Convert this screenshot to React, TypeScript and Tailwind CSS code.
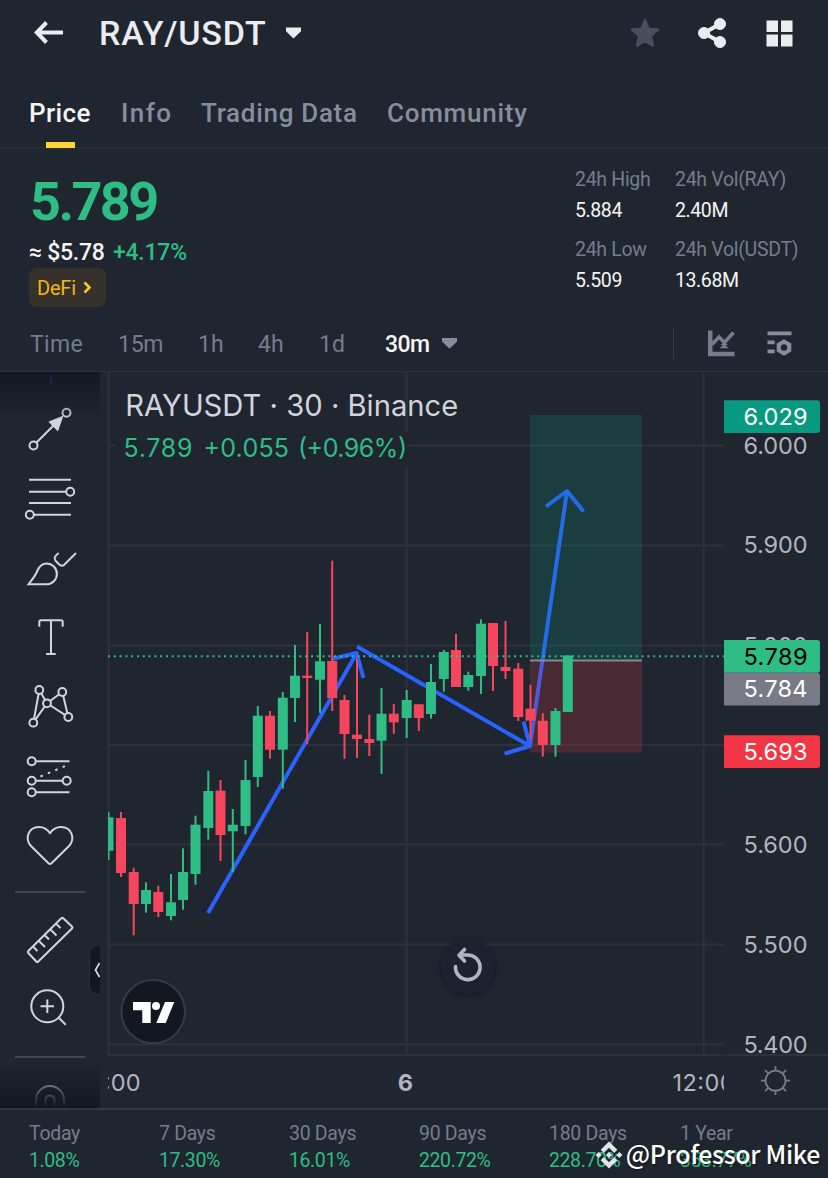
import { ReactNode } from 'react'

type Candle = [x: number, high: number, low: number, top: number, bottom: number, up: boolean]

const CANDLES: Candle[] = [
  [108.5, 812.3, 860, 817.3, 850.7, true],
  [121, 812, 877, 818, 873, false],
  [133.7, 867.7, 935.3, 872, 904, false],
  [146, 882.3, 912.7, 890, 904, true],
  [158.3, 885.7, 917, 892, 912, false],
  [171, 874, 920.3, 902.3, 916, true],
  [183, 848.3, 909.7, 872, 900, true],
  [195.5, 815.7, 884.7, 824.7, 874, true],
  [208.3, 770.7, 839.7, 791, 828, true],
  [220.5, 780, 861, 790.7, 835, false],
  [232.8, 809, 872, 824.7, 831.3, true],
  [245.5, 760, 834.3, 780, 826, true],
  [257.8, 706, 787, 715.7, 777, true],
  [270, 711, 758.7, 715.7, 749.7, false],
  [282.8, 692, 788.7, 697.7, 749.7, true],
  [295, 645, 722, 675.7, 698, true],
  [307.2, 632, 744, 675.7, 678, false],
  [320, 624, 713, 661.3, 679.7, true],
  [332.2, 560.7, 711, 661, 698, false],
  [344.5, 695, 758.7, 700, 734, false],
  [357, 659, 758, 734.7, 739, false],
  [369.3, 714.7, 756, 739, 743, false],
  [381.5, 688, 774, 713.7, 740.7, true],
  [393.8, 704, 733.7, 713.7, 722.3, false],
  [406.7, 690, 738, 700, 718, true],
  [418.8, 704.3, 731, 704.3, 718, false],
  [431, 664, 718.7, 682, 714, true],
  [443.8, 650, 691.7, 652, 679, true],
  [456, 634, 687, 650, 687, false],
  [468.3, 671.7, 690.7, 675, 687, true],
  [481, 619.3, 694, 623.7, 676, true],
  [493, 623, 691, 623, 666, false],
  [505.5, 621, 679, 667, 671, false],
  [518.3, 663, 721, 668.7, 717, false],
  [530.5, 684.7, 738.3, 708.7, 720.7, false],
  [542.8, 713.3, 756.7, 720.7, 745, false],
  [555.5, 708, 756.7, 711, 745, true],
  [567.8, 655.5, 712, 655.5, 712, true],
]

const GRID_Y = [445.5, 545.5, 645.5, 745, 844.5, 944.5, 1044.5]

const PRICE_LABELS = [
  { y: 453.5, text: '6.000' },
  { y: 553, text: '5.900' },
  { y: 653.5, text: '5.800' },
  { y: 852.5, text: '5.600' },
  { y: 952.5, text: '5.500' },
  { y: 1052.5, text: '5.400' },
]

const PRICE_TAGS = [
  { y: 400.3, text: '6.029', bg: '#089981', color: '#ffffff' },
  { y: 640, text: '5.789', bg: '#2ebd85', color: '#000000' },
  { y: 672.7, text: '5.784', bg: '#787b86', color: '#ffffff' },
  { y: 735.3, text: '5.693', bg: '#f23645', color: '#ffffff' },
]

const PERIODS = [
  { label: 'Today', value: '1.08%' },
  { label: '7 Days', value: '17.30%' },
  { label: '30 Days', value: '16.01%' },
  { label: '90 Days', value: '220.72%' },
  { label: '180 Days', value: '228.70%' },
  { label: '1 Year', value: '353.77%' },
]

function Header() {
  return (
    <header className="flex h-[66px] items-center pl-[33px] pr-[35px] text-[#eaecef]">
      <svg width="31" height="24" viewBox="0 0 31 24" fill="none" stroke="currentColor" strokeWidth="4">
        <path d="M30 11.500H4M13.500 1.500L3.800 11.500L13.500 21.500" />
      </svg>
      <h1 className="ml-[35px] whitespace-nowrap text-[34px] font-medium leading-[40px] tracking-[0.8px]">RAY/USDT</h1>
      <svg className="-mt-px ml-[19px]" width="17" height="12" viewBox="0 0 17 12" fill="currentColor">
        <path d="M1 0.5h15v3.8L8.500 11.500L1 4.300Z" />
      </svg>
      <div className="ml-auto flex items-center">
        <svg width="30" height="30" viewBox="0 0 30 30" fill="#474f5e" stroke="#474f5e" strokeWidth="2.400" strokeLinejoin="round">
          <path d="M15 2.200L18.600 10.600L28 11.500L21 17.900L22.900 27.600L15 22.800L7.100 27.600L9 17.900L2 11.500L11.400 10.600Z" />
        </svg>
        <svg className="ml-[37px]" width="30" height="32" viewBox="0 0 30 32" fill="currentColor" stroke="currentColor">
          <path d="M23 7L7 16L23 25" fill="none" strokeWidth="4" />
          <circle cx="23" cy="7" r="5.500" />
          <circle cx="7" cy="16" r="5.500" />
          <circle cx="23" cy="25" r="5.500" />
        </svg>
        <svg className="ml-[39px]" width="27" height="27" viewBox="0 0 27 27" fill="currentColor">
          <path d="M0.500 0.500h11.500v11.500h-11.500zM15 0.500h11.500v11.500h-11.500zM0.500 14.500h11.500v12h-11.500zM15 14.500h11.500v12h-11.500z" />
        </svg>
      </div>
    </header>
  )
}

function Tabs() {
  return (
    <nav className="flex h-[83px] items-start border-b-2 border-[#262c36] pl-[29px] pt-[30px] text-[26px] font-medium leading-[34px] text-[#848e9c]">
      <div className="flex w-[92px] flex-col">
        <span className="tracking-[0.4px] text-[#f5f5f5]">Price</span>
        <span className="ml-[16.500px] mt-[12px] h-[6px] w-[29px] bg-[#fcd535]" />
      </div>
      <span className="w-[80px] tracking-[1.400px]">Info</span>
      <span className="w-[186px] tracking-[0.7px]">Trading Data</span>
      <span className="tracking-[0.75px]">Community</span>
    </nav>
  )
}

function Stat({ label, value }: { label: string; value: string }) {
  return (
    <div className="h-[69.500px] whitespace-nowrap text-[19.500px] leading-[31px]">
      <p className="tracking-[-0.3px] text-[#747d8b]">{label}</p>
      <p className="tracking-[-0.4px] text-[#f5f5f5]">{value}</p>
    </div>
  )
}

function Summary() {
  return (
    <section className="flex h-[167px] justify-between pl-[29px]">
      <div>
        <p className="ml-px mt-[21px] text-[54px] font-bold leading-[64px] tracking-[-2.600px] text-[#2ebd85]">5.789</p>
        <p className="mt-[6px] flex whitespace-nowrap text-[23px] font-medium leading-[26px]">
          <span className="w-[84px] tracking-[-0.300px] text-[#f5f5f5]">≈ $5.78</span>
          <span className="tracking-[-0.250px] text-[#2ebd85]">+4.17%</span>
        </p>
        <div className="mt-[2px] flex h-[39px] w-[77px] items-center rounded-[8px] bg-[#36322b] pl-2 text-[20px] tracking-[-0.2px] text-[#f0b90b]">
          DeFi
          <svg className="ml-[7px]" width="9" height="13" viewBox="0 0 9 13" fill="none" stroke="#fcc72e" strokeWidth="2.600">
            <path d="M1.500 1.500L6.500 6.500L1.500 11.500" />
          </svg>
        </div>
      </div>
      <div className="grid h-[140px] grid-cols-[100px_153px] pt-[15px]">
        <Stat label="24h High" value="5.884" />
        <Stat label="24h Vol(RAY)" value="2.40M" />
        <Stat label="24h Low" value="5.509" />
        <Stat label="24h Vol(USDT)" value="13.68M" />
      </div>
    </section>
  )
}

function Intervals() {
  return (
    <div className="flex h-[56px] items-center border-b border-[#2d333d] pl-[30px] pr-[36px] pt-[2px] text-[23px] leading-[30px] text-[#747d8b]">
      <span className="w-[88px] tracking-[0.300px]">Time</span>
      <span className="w-[80px] tracking-[-0.3px]">15m</span>
      <span className="w-[60px]">1h</span>
      <span className="w-[61px]">4h</span>
      <span className="w-[66px]">1d</span>
      <span className="w-[57px] font-medium tracking-[-0.6px] text-[#f5f5f5]">30m</span>
      <svg className="-mt-0.5" width="15" height="11" viewBox="0 0 15 11" fill="#848e9c">
        <path d="M0 0h15v3.500L7.500 10.700L0 3.500Z" />
      </svg>
      <div className="-mt-0.5 ml-auto flex items-center">
        <span className="h-[31px] w-px bg-[#363d48]" />
        <svg className="ml-[34px]" width="27" height="27" viewBox="0 0 27 27" fill="none" stroke="#747d8b">
          <path d="M2.200 0.500V24H26.500" strokeWidth="4.600" />
          <path d="M4 14.500L11 7L16.500 12.500L25.500 2.500" strokeWidth="3.600" />
          <path d="M12.500 15H20L16.200 11.500ZM11.500 18.300H20.800L16.200 14Z" fill="#747d8b" stroke="none" />
        </svg>
        <svg className="ml-[32px]" width="25" height="25" viewBox="0 0 25 25" fill="#848e9c">
          <path d="M0.500 0.500h24v3.800h-24zM0.500 9.500h7.200v3.800h-7.200zM0.500 18.500h7.200v3.800h-7.200z" />
          <path fillRule="evenodd" d="M17 8.300L24.300 12.500V20.500L17 24.700L9.700 20.500V12.500ZM17 13.300A3.200 3.200 0 1 0 17 19.700A3.200 3.200 0 1 0 17 13.300Z" />
        </svg>
      </div>
    </div>
  )
}

function Tool({ children }: { children: ReactNode }) {
  return (
    <svg className="block shrink-0" width="100" height="69" viewBox="0 0 100 69" fill="none" stroke="#d1d4dc" strokeWidth="2">
      {children}
    </svg>
  )
}

function Separator() {
  return (
    <div className="flex h-[27px] shrink-0 items-center pl-[15px]">
      <span className="h-[2px] w-[70px] bg-[#434651]" />
    </div>
  )
}

function Toolbar() {
  return (
    <aside className="relative flex h-[736px] w-[100px] shrink-0 flex-col overflow-hidden">
      <div className="h-[23px] shrink-0 pl-[50px]">
        <div className="h-[12px] w-[2px] bg-[#2962ff]" />
      </div>
      <Tool>
        <path d="M36.500 47.500L55 29" />
        <path d="M63.500 20.500L48.300 26.700L58 36.500Z" fill="#d1d4dc" stroke="none" />
        <circle cx="33.500" cy="50.500" r="4" />
        <circle cx="66.500" cy="17.700" r="4" />
      </Tool>
      <Tool>
        <path d="M29 15.700H71M29 27.700H66M29 39H71M34 50.700H71" />
        <circle cx="70.200" cy="27.700" r="4" />
        <circle cx="29.800" cy="50.700" r="4" />
      </Tool>
      <Tool>
        <path d="M28.500 51.300H46.500A10.400 10.400 0 0 0 46.500 30.500C42 30.500 39.500 33 37.500 37.500C35 43.500 31.500 47.500 28.500 51.300Z" />
        <path d="M58.700 20C54 23.500 54 26 55.500 27.700L59 31.300C61 33.200 63 33 64.500 31.500L76 20" />
      </Tool>
      <Tool>
        <path d="M39.300 24.700V20Q39.300 18.300 41 18.300H61Q62.700 18.300 62.700 20V24.700M51 18.300V52M46 52H55.700" />
      </Tool>
      <Tool>
        <path d="M39.300 19L33.300 51.700L47 32.300ZM47 32.300L62.300 21L68.300 46Z" />
        <g fill="#202630">
          <circle cx="39.300" cy="19" r="3.900" />
          <circle cx="62.300" cy="21" r="3.900" />
          <circle cx="47" cy="32.300" r="3.900" />
          <circle cx="68.300" cy="46" r="3.900" />
          <circle cx="33.300" cy="51.700" r="3.900" />
        </g>
      </Tool>
      <Tool>
        <path d="M36 21.300H69.500M36 40.700H62.500M36 52.300H69.500" />
        <path d="M40.500 36.500L66.500 25.500" strokeDasharray="2.500 5.500" />
        <circle cx="31.700" cy="21.300" r="4" />
        <circle cx="31.700" cy="40.700" r="4" />
        <circle cx="66.700" cy="40.700" r="4" />
        <circle cx="31.700" cy="52.300" r="4" />
      </Tool>
      <Tool>
        <path
          strokeLinejoin="round"
          d="M48.500 54.200L31 37C24.500 30 28 18 39 18C44 18 47.500 20.500 50 24.300C52.500 20.500 56 18 61 18C72 18 75.500 30 69 37L51.500 54.200Q50 55.500 48.500 54.200Z"
        />
      </Tool>
      <Separator />
      <Tool>
        <path strokeLinejoin="round" d="M61.300 13.300Q62.300 12.300 63.300 13.300L72 21.500Q73 22.500 72 23.500L38.300 56.500Q37.300 57.500 36.300 56.500L28.300 48Q27.300 47 28.300 46Z" />
        <path d="M33 41.500L37.500 46M38.700 35.800L45 42M44.500 30L49 34.500M50.200 24.300L56.500 30.500M56 18.600L60.500 23" />
      </Tool>
      <Tool>
        <circle cx="47.300" cy="32.300" r="16" />
        <path d="M58.500 43.500L65.700 50.700M40.500 32.300H54M47.300 25.500V39" />
      </Tool>
      <Separator />
      <Tool>
        <path d="M36 45V30A14 14 0 0 1 64 30V45M45.500 45V30A4.500 4.500 0 0 1 54.500 30V45" />
      </Tool>
      <div className="absolute inset-x-0 top-0 h-[48px] bg-gradient-to-b from-[#131722] to-[#13172200]" />
      <div className="absolute inset-x-0 bottom-0 h-[48px] bg-gradient-to-t from-[#131722] to-[#13172200]" />
      <div className="absolute -right-px top-[573px] flex h-[50px] w-[12px] items-center rounded-l-[9px] border border-[#2a2e39] bg-[#131722] pl-[3px]">
        <svg width="7" height="16" viewBox="0 0 7 16" fill="none" stroke="#d1d4dc" strokeWidth="1.800">
          <path d="M6.500 1L2.500 8L6.500 15" />
        </svg>
      </div>
    </aside>
  )
}

function Chart() {
  return (
    <svg className="block shrink-0" width="728" height="736" viewBox="100 372 728 736" fontFamily="Inter, sans-serif">
      <defs>
        <clipPath id="plot">
          <rect x="108" y="372" width="616" height="736" />
        </clipPath>
        <filter id="shadow" x="-30%" y="-30%" width="160%" height="160%">
          <feDropShadow dx="0" dy="3" stdDeviation="3" floodColor="#10131a" floodOpacity="0.6" />
        </filter>
      </defs>

      <g stroke="#2c323c" strokeWidth="2">
        {GRID_Y.map((y) => (
          <path key={y} d={`M108 ${y}H724`} />
        ))}
        <path d="M108.700 372V1055M406.500 372V1055M703.700 372V1055M108 1055H724M726 1055H828" />
      </g>
      <rect x="115" y="432" width="294" height="34" fill="#202630" />

      {/* trend arrows and the long position sit below the candles */}
      <g fill="none" stroke="#2962ff" strokeWidth="4" strokeLinejoin="round">
        <path d="M208 913L356.500 653.500M332 659L356.500 653L363.500 678" />
        <path d="M357 646.500L530 746M504.500 753.700L530 746L523.500 721.500" />
        <path d="M530 746L567 491M546 506.500L567 491L583.500 511.500" />
      </g>
      <rect x="530" y="415" width="112" height="245" fill="#089981" fillOpacity="0.2" />
      <rect x="530" y="661" width="112" height="91.500" fill="#f23645" fillOpacity="0.2" />
      <path d="M530 660.500H642" stroke="#868993" strokeWidth="2" />

      <g clipPath="url(#plot)">
        {CANDLES.map(([x, high, low, top, bottom, up]) => (
          <g key={x} fill={up ? '#2ebd85' : '#f6465d'}>
            <rect x={x - 1} y={high} width="2" height={low - high} />
            <rect x={x - 5} y={top} width="10" height={bottom - top} />
          </g>
        ))}
      </g>
      <path d="M108 656.300H724" stroke="#2ebd85" strokeWidth="2" strokeDasharray="2 3.800" />

      <text x="125.300" y="415.500" fontSize="29.500" fill="#d1d4dc" textLength="333" lengthAdjust="spacingAndGlyphs">RAYUSDT · 30 · Binance</text>
      <g fontSize="25" fill="#2ebd85">
        <text x="123.500" y="457" textLength="69">5.789</text>
        <text x="203.500" y="457" textLength="85.500">+0.055</text>
        <text x="298" y="457" textLength="109">(+0.96%)</text>
      </g>

      <g fontSize="23.500">
        {PRICE_LABELS.map((l) => (
          <text key={l.text} x="743.500" y={l.y} fill="#b2b5be" textLength="64">
            {l.text}
          </text>
        ))}
        {PRICE_TAGS.map((t) => (
          <g key={t.text}>
            <path d={`M724 ${t.y}h93q3 0 3 3v26.700q0 3 -3 3h-93z`} fill={t.bg} />
            <text x="743.500" y={t.y + 24.700} fill={t.color} textLength="64">
              {t.text}
            </text>
          </g>
        ))}
        <g clipPath="url(#plot)" fill="#b2b5be">
          <text x="140.500" y="1091" textAnchor="end">18:00</text>
          <text x="405.500" y="1091" textAnchor="middle" fontWeight="700">6</text>
          <text x="672.500" y="1091" textLength="62">12:00</text>
        </g>
      </g>

      <g fill="none" stroke="#787b86" strokeWidth="1.800">
        <circle cx="775.500" cy="1080.700" r="10" />
        <path d="M775.500 1070v-4M775.500 1091v4M765 1080.700h-4M786 1080.700h4M768 1073.200l-3 -3M783 1073.200l3 -3M768 1088.200l-3 3M783 1088.200l3 3" />
      </g>

      <circle cx="468" cy="965" r="27" fill="#1f232e" filter="url(#shadow)" />
      <path
        d="M455.500 966.500A12.300 12.300 0 1 0 467.500 955H460.500M464.500 949.500L459 955.200L464.500 961"
        fill="none"
        stroke="#b2b5be"
        strokeWidth="3.600"
        strokeLinecap="round"
        strokeLinejoin="round"
      />

      <circle cx="153.200" cy="1011.600" r="31.700" fill="#131722" stroke="#363a45" strokeWidth="2" />
      <g fill="#ffffff">
        <path d="M133 1002H150.700V1023H142.300V1010.300H133ZM165 1002H174.300L165.700 1023H156.300Z" />
        <circle cx="156" cy="1006" r="4" />
      </g>
    </svg>
  )
}

function Performance() {
  return (
    <footer className="relative h-[70px] border-t-2 border-[#2f3641] pl-[29px] pt-[11px]">
      <div className="grid grid-cols-[130px_130px_130px_130px_131px_100px] whitespace-nowrap text-[19.500px] leading-[26.500px]">
        {PERIODS.map((p) => (
          <div key={p.label}>
            <p className="tracking-[-0.3px] text-[#747d8b]">{p.label}</p>
            <p className="tracking-[-0.4px] text-[#2ebd85]">{p.value}</p>
          </div>
        ))}
      </div>
      <div className="absolute right-[8px] top-[25px] flex items-center gap-[3px] text-white">
        <svg className="mt-[3px]" width="28" height="28" viewBox="0 0 28 28" fill="#e3e4e6">
          <path d="M14 0.500L22.300 8.800L19.200 11.900L14 6.700L8.800 11.900L5.700 8.800ZM14 27.500L22.300 19.200L19.200 16.100L14 21.300L8.800 16.100L5.700 19.200ZM14 10.900L17.100 14L14 17.100L10.900 14ZM3.600 10.900L6.700 14L3.600 17.100L0.500 14ZM24.400 10.900L27.500 14L24.400 17.100L21.300 14Z" />
        </svg>
        <span className="whitespace-nowrap font-['Noto_Sans_CJK_SC','Noto_Sans',sans-serif] text-[25px] font-medium leading-[36px] tracking-[-0.35px] [text-shadow:1px_1px_2px_rgba(0,0,0,0.5)]">
          @Professor Mike
        </span>
      </div>
    </footer>
  )
}

export default function App() {
  return (
    <main className="h-[1178px] w-[828px] overflow-hidden bg-[#202630] font-[Roboto,sans-serif]">
      <Header />
      <Tabs />
      <Summary />
      <Intervals />
      <div className="flex h-[736px]">
        <Toolbar />
        <Chart />
      </div>
      <Performance />
    </main>
  )
}
